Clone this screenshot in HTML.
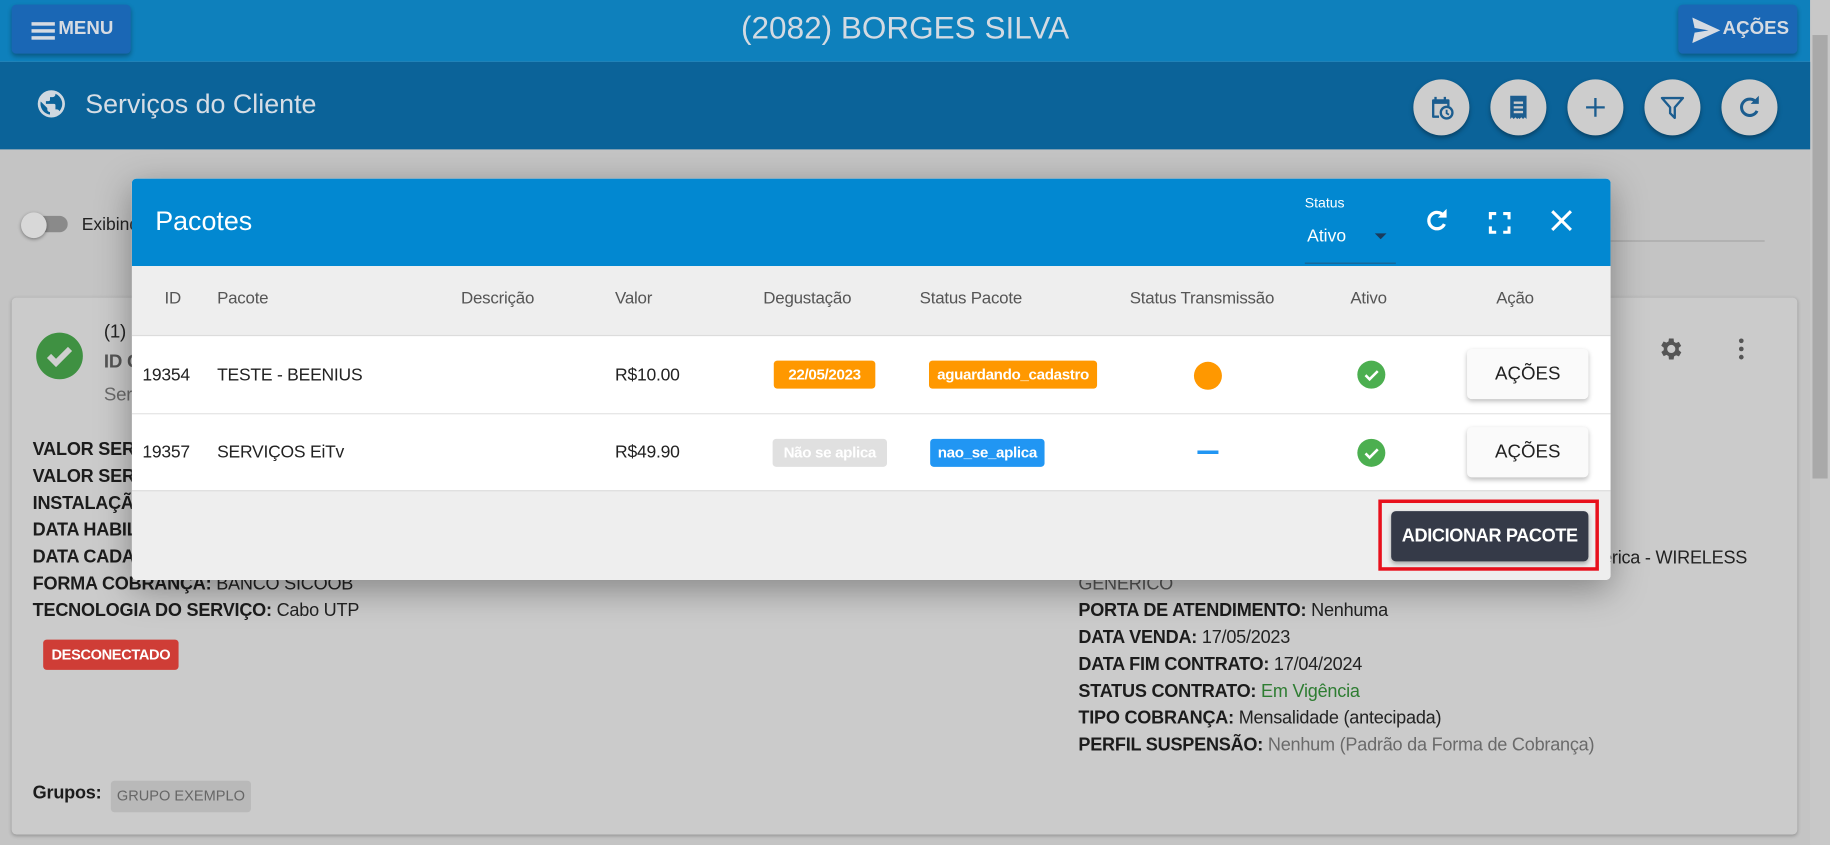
<!DOCTYPE html>
<html><head><meta charset="utf-8"><style>
*{box-sizing:border-box;margin:0;padding:0}
html,body{width:1830px;height:845px;overflow:hidden;background:#c2c2c2;font-family:"Liberation Sans",Arial,sans-serif}
#w{position:absolute;left:0;top:0;width:1568px;height:724px;transform:scale(1.16709);transform-origin:0 0;background:#c4c4c4}
.a{position:absolute}
.t{position:absolute;white-space:nowrap}
.top{left:0;top:0;width:1551px;height:53px;background:#0e80bc}
.btn{background:#1a67b5;border-radius:4px;box-shadow:0 2px 4px rgba(0,0,0,.3);color:#d6dbe2;font-size:16px;font-weight:bold}
.bar2{left:0;top:53px;width:1551px;height:75px;background:#0b6399}
.cb{width:48px;height:48px;border-radius:50%;background:#cdcdcd;top:68px;box-shadow:0 2px 4px rgba(0,0,0,.35)}
.cb svg{position:absolute;left:12px;top:12px}
.card{left:10px;top:255px;width:1530px;height:460px;background:#cbcbcb;border-radius:4px;box-shadow:0 1px 3px rgba(0,0,0,.25)}
.ln{font-size:15.5px;color:#222;letter-spacing:-.2px}
.ln b{color:#1c1c1c}
.modal{left:113px;top:153px;width:1267px;height:344px;background:#fff;border-radius:4px;box-shadow:0 8px 30px rgba(0,0,0,.35);overflow:hidden}
.th{font-size:14.5px;color:#555;top:248px;letter-spacing:-.2px}
.td{font-size:15px;color:#222;letter-spacing:-.2px}
.bd{height:24px;border-radius:3px;color:#fff;font-size:13px;font-weight:bold;text-align:center;line-height:24px;letter-spacing:-.3px}
.ac{width:104px;height:43px;background:#fafafa;border-radius:4px;box-shadow:0 2px 4px rgba(0,0,0,.25);text-align:center;line-height:43px;font-size:16px;color:#222}
</style></head><body><div id="w">
<div class="a top"></div>
<div class="a btn" style="left:10px;top:4px;width:102px;height:42px">
 <div class="a" style="left:17px;top:15px;width:20px;height:3px;background:#d6dbe2;box-shadow:0 6px 0 #d6dbe2,0 12px 0 #d6dbe2"></div>
 <span class="t" style="left:40px;top:12px">MENU</span></div>
<div class="t" style="left:0;width:1551px;text-align:center;top:9px;font-size:27px;color:#d3dae2">(2082) BORGES SILVA</div>
<div class="a btn" style="left:1438px;top:4px;width:102px;height:42px">
 <svg class="a" style="left:12px;top:11px" width="24" height="22" viewBox="0 0 24 22"><path d="M0 0L24 11L0 22L2 13L14 11L2 9Z" fill="#d6dbe2"/></svg>
 <span class="t" style="left:38px;top:12px">AÇÕES</span></div>
<div class="a" style="left:1551px;top:0;width:17px;height:724px;background:#c8c8c8"></div>
<div class="a" style="left:1553px;top:30px;width:13px;height:380px;background:#a9a9a9"></div>
<div class="a bar2"></div>
<svg class="a" style="left:30px;top:75px" width="28" height="28" viewBox="0 0 24 24"><path fill="#cfd8e0" d="M12 2a10 10 0 100 20 10 10 0 000-20zm-1 17.9A8 8 0 014.2 10.3L9 15v1a2 2 0 002 2zm6.9-2.5A2 2 0 0016 16h-1v-3a1 1 0 00-1-1H8v-2h2a1 1 0 001-1V7h2a2 2 0 002-2v-.4a8 8 0 012.9 12.8z"/></svg>
<div class="t" style="left:73px;top:76px;font-size:23px;color:#d6dde5">Serviços do Cliente</div>
<div class="a cb" style="left:1211px"><svg width="24" height="24" viewBox="0 0 24 24"><path fill="#1c5d8f" d="M4 5h2V3h2v2h6V3h2v2h2a1 1 0 011 1v5h-2V9H6v10h4v2H5a1 1 0 01-1-1V6a1 1 0 011-1z"/><circle cx="16.5" cy="16.5" r="5" fill="none" stroke="#1c5d8f" stroke-width="2"/><path d="M16.5 14v3l2 1.3" stroke="#1c5d8f" stroke-width="1.6" fill="none"/></svg></div>
<div class="a cb" style="left:1277px"><svg width="24" height="24" viewBox="0 0 24 24"><path fill="#1c5d8f" d="M5 2h14v20l-1.5-1.5L16 22l-1.5-1.5L13 22l-1-1-1 1-1.5-1.5L8 22l-1.5-1.5L5 22zM8 7v2h8V7zm0 4v2h8v-2zm0 4v2h8v-2z"/></svg></div>
<div class="a cb" style="left:1343px"><svg width="24" height="24" viewBox="0 0 24 24"><path d="M12 4v16M4 12h16" stroke="#1c5d8f" stroke-width="2"/></svg></div>
<div class="a cb" style="left:1409px"><svg width="24" height="24" viewBox="0 0 24 24"><path d="M3 4h18l-7 8v9l-4-4v-5z" fill="none" stroke="#1c5d8f" stroke-width="2" stroke-linejoin="round"/></svg></div>
<div class="a cb" style="left:1475px"><svg width="24" height="24" viewBox="0 0 24 24"><path d="M18 8a7 7 0 10.5 7" fill="none" stroke="#1c5d8f" stroke-width="2.6"/><path d="M13 9h7V2z" fill="#1c5d8f"/></svg></div>
<div class="a" style="left:22px;top:185px;width:36px;height:14px;border-radius:7px;background:#8a8a8a"></div>
<div class="a" style="left:18px;top:182px;width:22px;height:22px;border-radius:50%;background:#d8d8d8;box-shadow:0 1px 3px rgba(0,0,0,.4)"></div>
<div class="t" style="left:70px;top:184px;font-size:15px;color:#222">Exibindo</div>
<div class="a" style="left:1380px;top:206px;width:132px;height:1px;background:#a5a5a5"></div>
<div class="a card"></div>
<div class="a" style="left:31px;top:285px;width:40px;height:40px;border-radius:50%;background:#3f9142"><svg width="40" height="40"><path d="M11 20l6 6 12-12" stroke="#cfcfcf" stroke-width="5" fill="none"/></svg></div>
<div class="t ln" style="left:89px;top:276px;font-size:16px">(1)</div>
<div class="t ln" style="left:89px;top:302px;font-size:16px;font-weight:bold;color:#555">ID C</div>
<div class="t ln" style="left:89px;top:330px;font-size:16px;color:#6a6a6a">Ser</div>
<svg class="a" style="left:1419px;top:287px" width="24" height="24" viewBox="0 0 24 24"><path fill="#555" d="M19.4 13a7.5 7.5 0 000-2l2.1-1.6-2-3.5-2.5 1a7.3 7.3 0 00-1.7-1L15 3h-4l-.4 2.6a7.3 7.3 0 00-1.7 1l-2.5-1-2 3.5L6.6 11a7.5 7.5 0 000 2l-2.1 1.6 2 3.5 2.5-1a7.3 7.3 0 001.7 1L11 21h4l.4-2.6a7.3 7.3 0 001.7-1l2.5 1 2-3.5zM13 15.5a3.5 3.5 0 110-7 3.5 3.5 0 010 7z"/></svg>
<div class="a" style="left:1490px;top:290px;width:4px;height:4px;border-radius:50%;background:#555;box-shadow:0 7px 0 #555,0 14px 0 #555"></div>
<div class="t ln" style="left:28px;top:377px"><b>VALOR SERVIÇO:</b></div>
<div class="t ln" style="left:28px;top:400px"><b>VALOR SERVIÇO:</b></div>
<div class="t ln" style="left:28px;top:423px"><b>INSTALAÇÃO:</b></div>
<div class="t ln" style="left:28px;top:446px"><b>DATA HABILITAÇÃO:</b></div>
<div class="t ln" style="left:28px;top:469px"><b>DATA CADASTRO:</b></div>
<div class="t ln" style="left:28px;top:492px"><b>FORMA COBRANÇA:</b> BANCO SICOOB</div>
<div class="t ln" style="left:28px;top:515px"><b>TECNOLOGIA DO SERVIÇO:</b> Cabo UTP</div>
<div class="a bd" style="left:37px;top:548px;width:116px;height:26px;line-height:26px;background:#cf3d36;font-size:12.5px">DESCONECTADO</div>
<div class="t ln" style="right:71px;top:470px">Genérica - WIRELESS</div>
<div class="t ln" style="left:924px;top:492px;color:#555">GENERICO</div>
<div class="t ln" style="left:924px;top:515px"><b>PORTA DE ATENDIMENTO:</b> Nenhuma</div>
<div class="t ln" style="left:924px;top:538px"><b>DATA VENDA:</b> 17/05/2023</div>
<div class="t ln" style="left:924px;top:561px"><b>DATA FIM CONTRATO:</b> 17/04/2024</div>
<div class="t ln" style="left:924px;top:584px"><b>STATUS CONTRATO:</b> <span style="color:#2e7d32">Em Vigência</span></div>
<div class="t ln" style="left:924px;top:607px"><b>TIPO COBRANÇA:</b> Mensalidade (antecipada)</div>
<div class="t ln" style="left:924px;top:630px"><b>PERFIL SUSPENSÃO:</b> <span style="color:#6a6a6a">Nenhum (Padrão da Forma de Cobrança)</span></div>
<div class="t ln" style="left:28px;top:671px"><b>Grupos:</b></div>
<div class="a" style="left:95px;top:669px;width:120px;height:27px;border-radius:3px;background:#b9b9b9;color:#666;font-size:12.5px;text-align:center;line-height:27px">GRUPO EXEMPLO</div>
<div class="a modal">
 <div class="a" style="left:0;top:0;width:1267px;height:75px;background:#0288d1"></div>
 <div class="t" style="left:20px;top:23px;font-size:23px;color:#fff">Pacotes</div>
 <div class="t" style="left:1005px;top:14px;font-size:12px;color:#fff">Status</div>
 <div class="t" style="left:1007px;top:41px;font-size:15px;color:#fff">Ativo</div>
 <div class="a" style="left:1065px;top:47px;border-left:5px solid transparent;border-right:5px solid transparent;border-top:5px solid #1a3b5c"></div>
 <div class="a" style="left:1005px;top:72px;width:78px;height:1px;background:#1f5f8a"></div>
 <svg class="a" style="left:1106px;top:24px" width="24" height="24" viewBox="0 0 24 24"><path d="M18 8a7 7 0 10.6 7" fill="none" stroke="#fff" stroke-width="2.8"/><path d="M13 9.5h7.5V2z" fill="#fff"/></svg>
 <svg class="a" style="left:1162px;top:28px" width="20" height="20" viewBox="0 0 20 20"><path d="M2 7V2h5M13 2h5v5M18 13v5h-5M7 18H2v-5" fill="none" stroke="#fff" stroke-width="2.6"/></svg>
 <svg class="a" style="left:1215px;top:26px" width="20" height="20" viewBox="0 0 20 20"><path d="M2 2L18 18M18 2L2 18" stroke="#fff" stroke-width="2.6"/></svg>
 <div class="a" style="left:0;top:75px;width:1267px;height:60px;background:#eeeeee;border-bottom:1px solid #dcdcdc"></div>
 <div class="a" style="left:0;top:201px;width:1267px;height:1px;background:#e3e3e3"></div>
 <div class="a" style="left:0;top:267px;width:1267px;height:77px;background:#eeeeee;border-top:1px solid #dcdcdc"></div>
</div>
<div class="t th" style="left:141px">ID</div>
<div class="t th" style="left:186px">Pacote</div>
<div class="t th" style="left:395px">Descrição</div>
<div class="t th" style="left:527px">Valor</div>
<div class="t th" style="left:654px">Degustação</div>
<div class="t th" style="left:788px">Status Pacote</div>
<div class="t th" style="left:968px">Status Transmissão</div>
<div class="t th" style="left:1157px">Ativo</div>
<div class="t th" style="left:1282px">Ação</div>
<div class="t td" style="left:122px;top:313px">19354</div>
<div class="t td" style="left:186px;top:313px">TESTE - BEENIUS</div>
<div class="t td" style="left:527px;top:313px">R$10.00</div>
<div class="a bd" style="left:663px;top:309px;width:87px;background:#ff9800">22/05/2023</div>
<div class="a bd" style="left:796px;top:309px;width:144px;background:#ff9800">aguardando_cadastro</div>
<div class="a" style="left:1023px;top:310px;width:24px;height:24px;border-radius:50%;background:#ff9800"></div>
<div class="a" style="left:1163px;top:309px;width:24px;height:24px;border-radius:50%;background:#4caf50"><svg width="24" height="24"><path d="M7 12.5l3.5 3.5 7-7" stroke="#fff" stroke-width="2.2" fill="none"/></svg></div>
<div class="a ac" style="left:1257px;top:299px">AÇÕES</div>
<div class="t td" style="left:122px;top:379px">19357</div>
<div class="t td" style="left:186px;top:379px">SERVIÇOS EiTv</div>
<div class="t td" style="left:527px;top:379px">R$49.90</div>
<div class="a bd" style="left:662px;top:376px;width:98px;background:#e0e0e0">Não se aplica</div>
<div class="a bd" style="left:797px;top:376px;width:98px;background:#2196f3">nao_se_aplica</div>
<div class="a" style="left:1026px;top:386px;width:18px;height:3px;background:#2196f3"></div>
<div class="a" style="left:1163px;top:376px;width:24px;height:24px;border-radius:50%;background:#4caf50"><svg width="24" height="24"><path d="M7 12.5l3.5 3.5 7-7" stroke="#fff" stroke-width="2.2" fill="none"/></svg></div>
<div class="a ac" style="left:1257px;top:366px">AÇÕES</div>
<div class="a" style="left:1181px;top:428px;width:189px;height:61px;border:3px solid #e8101c"></div>
<div class="a" style="left:1192px;top:438px;width:169px;height:43px;background:#353a48;border-radius:4px;box-shadow:0 2px 4px rgba(0,0,0,.3);color:#fff;font-size:15.5px;font-weight:bold;text-align:center;line-height:43px;letter-spacing:-.3px">ADICIONAR PACOTE</div>
</div></body></html>
